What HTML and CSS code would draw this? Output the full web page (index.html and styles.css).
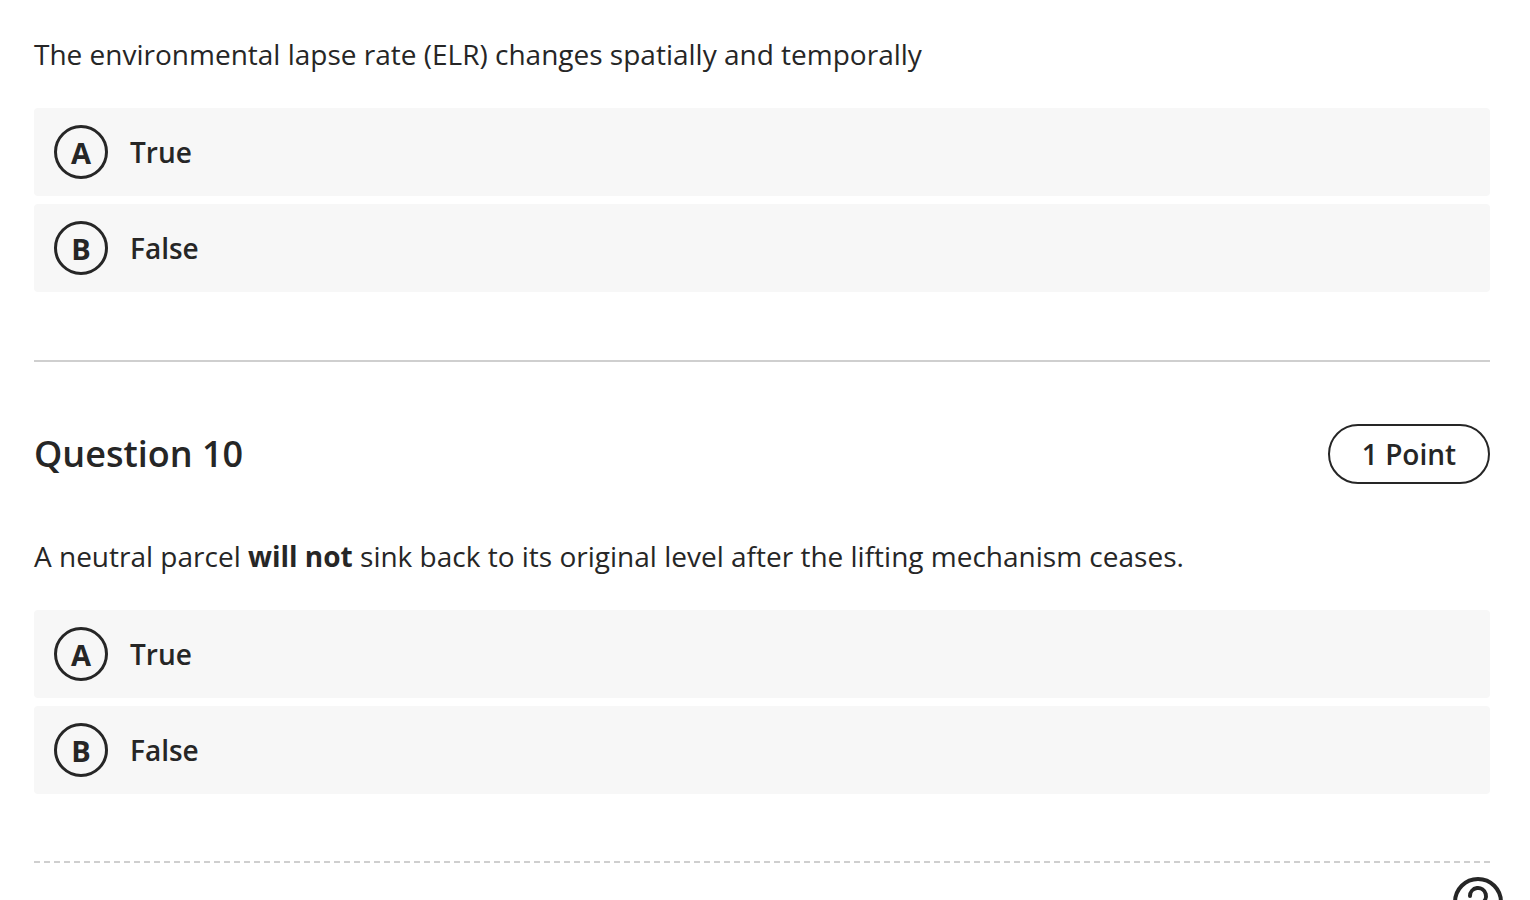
FILE: index.html
```html
<!DOCTYPE html>
<html lang="en">
<head>
<meta charset="utf-8">
<title>Quiz</title>
<link rel="stylesheet" href="styles.css">
</head>
<body>
<main class="quiz">
  <section class="question first">
    <p class="prompt">The environmental lapse rate (ELR) changes spatially and temporally</p>
    <ul class="options">
      <li class="option"><span class="letter">A</span><span class="label">True</span></li>
      <li class="option"><span class="letter">B</span><span class="label">False</span></li>
    </ul>
  </section>
  <hr class="divider">
  <section class="question">
    <header class="q-head">
      <h2 class="q-title">Question 10</h2>
      <span class="points">1 Point</span>
    </header>
    <p class="prompt">A neutral parcel <strong>will not</strong> sink back to its original level after the lifting mechanism ceases.</p>
    <ul class="options">
      <li class="option"><span class="letter">A</span><span class="label">True</span></li>
      <li class="option"><span class="letter">B</span><span class="label">False</span></li>
    </ul>
  </section>
  <hr class="dashed">
</main>
<button class="help" aria-label="Help">
  <svg width="52" height="52" viewBox="0 0 52 52"><circle cx="26" cy="26" r="23" fill="none" stroke="#262626" stroke-width="4"/><path d="M18 20 a8 8 0 1 1 11 7.4 c-2 1 -3 2.4 -3 4.6 v2" fill="none" stroke="#262626" stroke-width="4" stroke-linecap="round"/><circle cx="26" cy="40" r="2.5" fill="#262626"/></svg>
</button>
</body>
</html>
```
FILE: styles.css
```css
html, body {
  margin: 0;
  padding: 0;
  background: #fff;
}
body {
  font-family: "Open Sans", "Noto Sans", sans-serif;
  color: #262626;
  overflow: hidden;
  height: 900px;
}
.quiz {
  padding: 0 40px 0 34px;
  width: 1456px;
}
.question.first {
  padding-top: 34px;
}
.prompt {
  margin: 0;
  font-size: 28px;
  line-height: 40px;
}
.prompt strong {
  font-weight: 700;
}
.options {
  list-style: none;
  margin: 34px 0 0;
  padding: 0;
  display: flex;
  flex-direction: column;
  gap: 8px;
}
.option {
  background: #f7f7f7;
  border-radius: 4px;
  height: 88px;
  display: flex;
  align-items: center;
  padding-left: 20px;
}
.letter {
  width: 48px;
  height: 48px;
  border: 3px solid #262626;
  border-radius: 50%;
  display: flex;
  align-items: center;
  justify-content: center;
  font-size: 29px;
  font-weight: 700;
  line-height: 1;
}
.label {
  margin-left: 22px;
  font-size: 28px;
  font-weight: 600;
}
.divider {
  border: 0;
  border-top: 2px solid #cfcfcf;
  margin: 68px 0 0;
}
.q-head {
  display: flex;
  align-items: center;
  justify-content: space-between;
  margin-top: 62px;
}
.q-title {
  margin: 0;
  font-size: 36px;
  font-weight: 600;
  line-height: 60px;
}
.points {
  box-sizing: border-box;
  height: 60px;
  width: 162px;
  border: 2px solid #262626;
  border-radius: 30px;
  display: flex;
  align-items: center;
  justify-content: center;
  font-size: 28px;
  font-weight: 600;
}
.q-head + .prompt {
  margin-top: 52px;
}
.dashed {
  border: 0;
  border-top: 2px dashed #cfcfcf;
  margin: 67px 0 0;
}
.help {
  position: absolute;
  left: 1452px;
  top: 876px;
  padding: 0;
  border: 0;
  background: none;
  width: 52px;
  height: 52px;
}
.help svg {
  display: block;
}
```
